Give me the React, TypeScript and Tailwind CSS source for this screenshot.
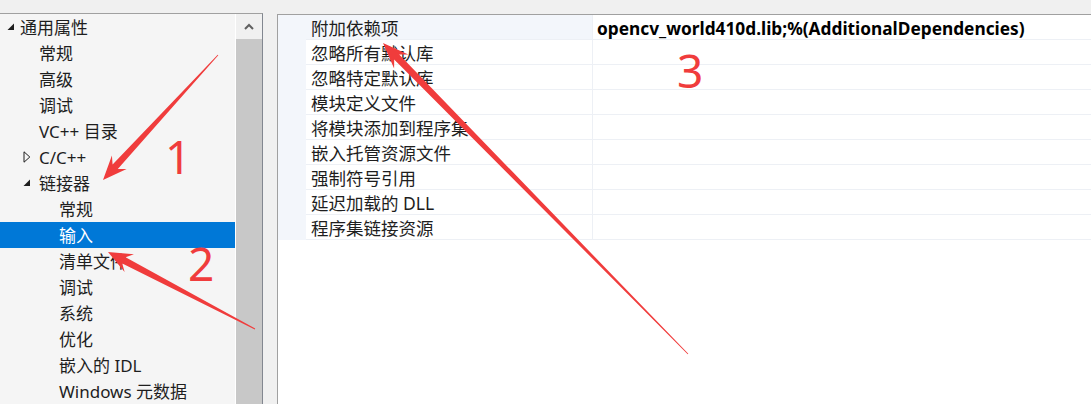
import React from "react";

type Node = { label: string; level: number; toggle?: "open" | "closed"; selected?: boolean };

const tree: Node[] = [
  { label: "通用属性", level: 0, toggle: "open" },
  { label: "常规", level: 1 },
  { label: "高级", level: 1 },
  { label: "调试", level: 1 },
  { label: "VC++ 目录", level: 1 },
  { label: "C/C++", level: 1, toggle: "closed" },
  { label: "链接器", level: 1, toggle: "open" },
  { label: "常规", level: 2 },
  { label: "输入", level: 2, selected: true },
  { label: "清单文件", level: 2 },
  { label: "调试", level: 2 },
  { label: "系统", level: 2 },
  { label: "优化", level: 2 },
  { label: "嵌入的 IDL", level: 2 },
  { label: "Windows 元数据", level: 2 },
];

const props = [
  "附加依赖项",
  "忽略所有默认库",
  "忽略特定默认库",
  "模块定义文件",
  "将模块添加到程序集",
  "嵌入托管资源文件",
  "强制符号引用",
  "延迟加载的 DLL",
  "程序集链接资源",
];

const font = { fontFamily: '"Noto Sans", "Noto Sans CJK SC", sans-serif' };

function Toggle({ kind }: { kind: "open" | "closed" }) {
  if (kind === "open")
    return (
      <svg width="8" height="8" viewBox="0 0 8 8" className="shrink-0">
        <path d="M7 0.5 L7 7 L0.5 7 Z" fill="#1e1e1e" />
      </svg>
    );
  return (
    <svg width="8" height="12" viewBox="0 0 8 12" className="shrink-0">
      <path d="M1 0.8 L6.8 6 L1 11.2 Z" fill="none" stroke="#1e1e1e" strokeWidth="1" />
    </svg>
  );
}

// tapered annotation arrow, tail -> tip
function arrow(tx: number, ty: number, px: number, py: number, L = 22, W = 10, w1 = 3) {
  const dx = px - tx;
  const dy = py - ty;
  const len = Math.hypot(dx, dy);
  const ux = dx / len;
  const uy = dy / len;
  const nx = -uy;
  const ny = ux;
  const pt = (x: number, y: number) => `${x.toFixed(1)},${y.toFixed(1)}`;
  const bx = px - ux * L * 0.75;
  const by = py - uy * L * 0.75;
  const wx = px - ux * L;
  const wy = py - uy * L;
  return [
    pt(tx + nx * 0.4, ty + ny * 0.4),
    pt(bx + nx * w1, by + ny * w1),
    pt(wx + nx * W, wy + ny * W),
    pt(px, py),
    pt(wx - nx * W, wy - ny * W),
    pt(bx - nx * w1, by - ny * w1),
    pt(tx - nx * 0.4, ty - ny * 0.4),
  ].join(" ");
}

export default function App() {
  return (
    <div className="relative w-[1091px] h-[404px] overflow-hidden bg-[#f0f0f0] text-[#1e1e1e]" style={font}>
      <div className="flex h-full">
        {/* tree */}
        <div className="mt-[13px] w-[263px] shrink-0 flex border-t border-r border-[#a0a0a0] border-r-[#828790]">
          <div className="w-[236px] bg-[#f5f5f5] border-r border-white">
            {tree.map((n, i) => (
              <div
                key={i}
                className={`h-[26px] flex items-center text-[17px] leading-none ${
                  n.selected ? "bg-[#0078d7] text-white" : ""
                }`}
              >
                <div
                  className={`flex items-center justify-center ${
                    n.level === 0 ? "w-[20px] pl-[1px]" : n.level === 1 ? "w-[39px] pl-[15px]" : "w-[59px]"
                  }`}
                >
                  {n.toggle && <Toggle kind={n.toggle} />}
                </div>
                <span className="whitespace-pre">{n.label}</span>
              </div>
            ))}
          </div>
          <div className="flex-1 flex flex-col bg-[#f0f0f0]">
            <div className="h-[25px] flex items-center justify-center">
              <svg width="10" height="7" viewBox="0 0 10 7">
                <path d="M1 6 L5 2 L9 6" fill="none" stroke="#606060" strokeWidth="2" />
              </svg>
            </div>
            <div className="flex-1 bg-[#c8c8c8]" />
          </div>
        </div>

        {/* property grid */}
        <div className="ml-[14px] mt-[14px] flex-1 bg-white border-t border-l border-[#a0a0a0]">
          <div className="flex">
            <div className="w-[28px] bg-[#f3f6fb]" />
            <div className="flex-1">
              {props.map((p, i) => (
                <div key={i} className="h-[25px] flex border-b border-[#edf0f5]">
                  <div
                    className={`w-[287px] flex items-center pl-[5px] pt-[3px] text-[17.5px] leading-none border-r border-[#edf0f5] ${
                      i === 0 ? "bg-[#f3f6fb]" : ""
                    }`}
                  >
                    <span className="whitespace-pre">{p}</span>
                  </div>
                  <div className="flex-1 flex items-center pl-[4px] pt-[3px] text-[17.3px] font-bold text-black leading-none">
                    {i === 0 ? "opencv_world410d.lib;%(AdditionalDependencies)" : ""}
                  </div>
                </div>
              ))}
            </div>
          </div>
        </div>
      </div>

      {/* annotations */}
      <svg className="absolute inset-0 pointer-events-none" width="1091" height="404">
        <polygon points={arrow(218, 55, 103, 180, 24, 10, 3.5)} fill="#f03c3c" />
        <polygon points={arrow(255, 329, 108, 252, 24, 10, 3.5)} fill="#f03c3c" />
        <polygon points={arrow(688, 354, 383, 43, 26, 10, 3.5)} fill="#f03c3c" />
        <g fill="#f03c3c" fontSize="46" style={{ fontFamily: '"Noto Sans", sans-serif' }}>
          <text x="165" y="174">1</text>
          <text x="188" y="281">2</text>
          <text x="677" y="88">3</text>
        </g>
      </svg>
    </div>
  );
}
